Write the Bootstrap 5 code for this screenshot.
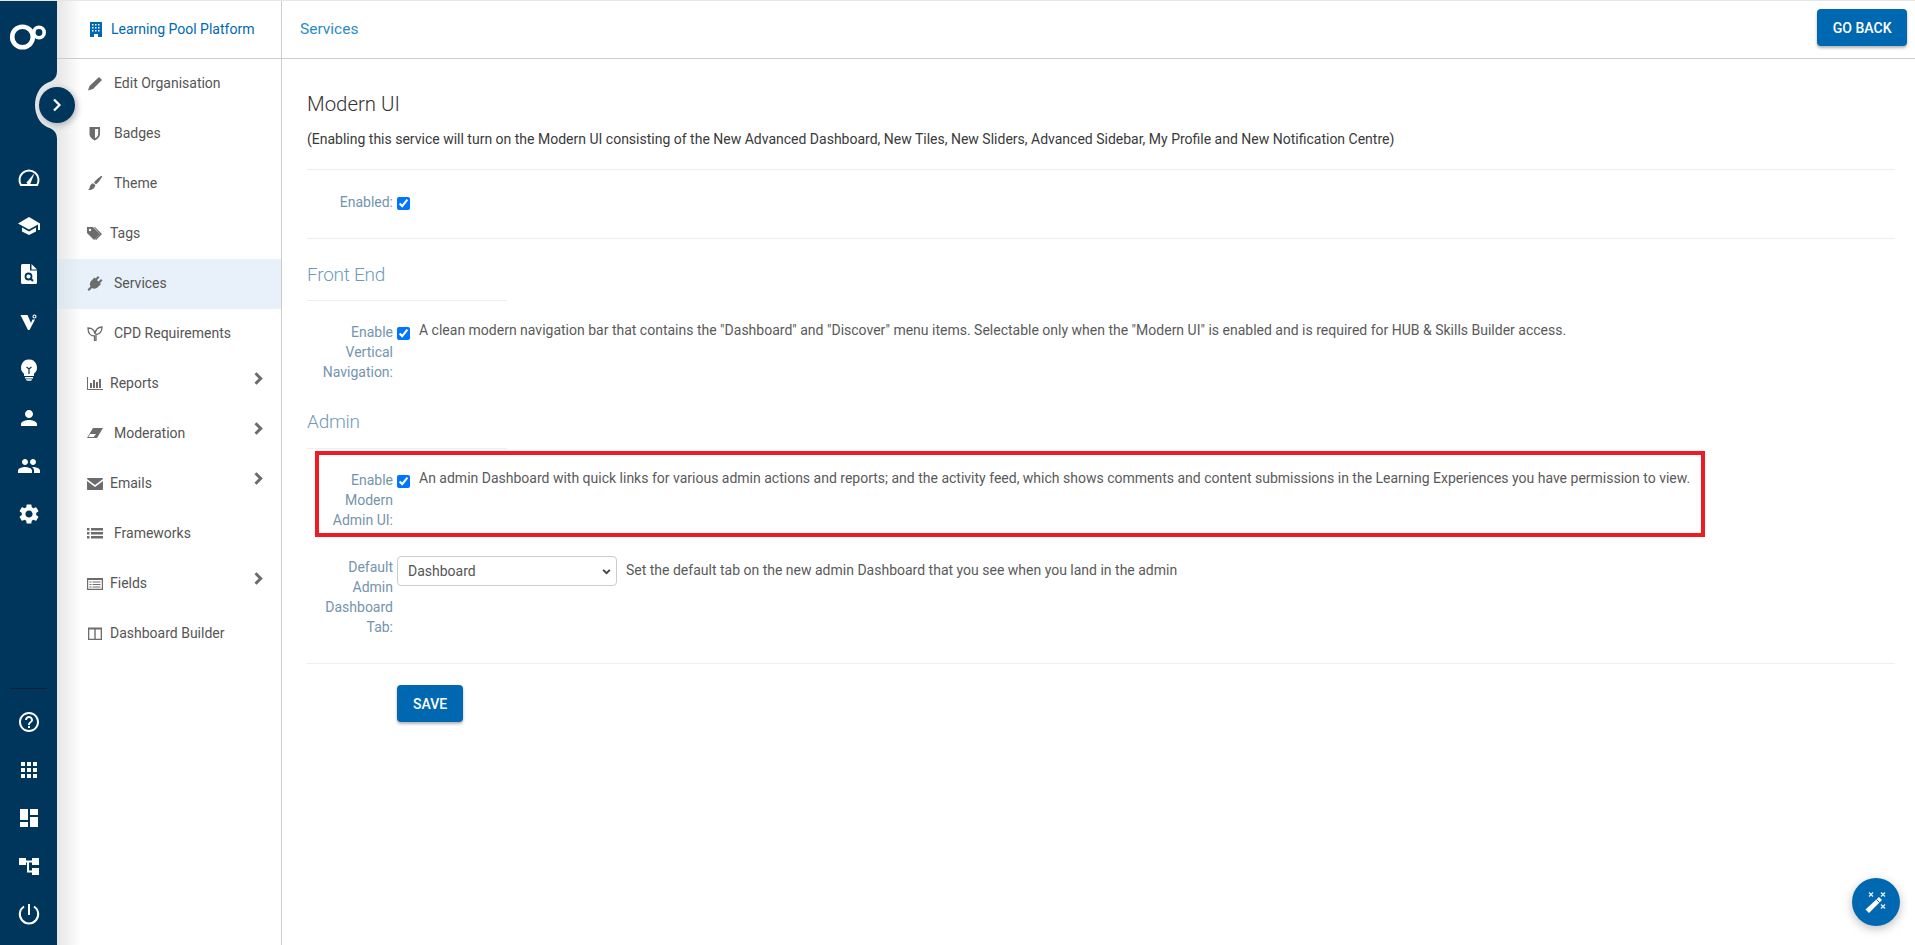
<!DOCTYPE html>
<html lang="en">
<head>
<meta charset="utf-8">
<title>Services</title>
<link rel="stylesheet" href="https://cdn.jsdelivr.net/npm/bootstrap@5.3.0/dist/css/bootstrap.min.css">
<style>
html,body{height:100%;overflow:hidden}
body{font-family:Roboto,"Liberation Sans",sans-serif;font-size:14px;line-height:20px;color:#5a5a5a;background:#fff;border-top:1px solid #e6e6e6}
.shell{height:944px}
.rail{width:57px;flex:none;background:#00365c;position:relative;z-index:3}
.rail svg{display:block;fill:#fff}
.rail-logo{height:72px;padding:20px 0 0 8px}
.rail-top{margin-top:81px}
.rail-cell{height:48px;display:flex;align-items:center;justify-content:center}
.rail-cell svg{width:24px;height:24px}
.rail-rule{width:37px;height:1px;background:#0b2234;margin:0 auto 9px}
.rail-bottom{margin-top:auto;padding-bottom:7px}
.notch{position:absolute;left:34px;top:70px;width:46px;height:68px;overflow:visible;z-index:4}
.toggle{position:absolute;left:39px;top:86px;width:36px;height:36px;border-radius:50%;background:#00365c;box-shadow:2px 2px 6px rgba(0,0,0,.25);z-index:5;display:flex;align-items:center;justify-content:center}
.subnav{width:225px;flex:none;border-right:1px solid #ccc;background:linear-gradient(90deg,#e6e6e6 0,#fff 24px)}
.subnav-head{height:56px;border-bottom:1px solid #ccc;display:flex;align-items:center;padding-left:33px;padding-bottom:1px;color:#0068b0;box-sizing:content-box;background:#fff linear-gradient(90deg,#e6e6e6 0,#fff 24px)}
.subnav-head svg{width:12px;height:15px;margin-right:9px;fill:#0068b0}
.side-link{height:50px;display:flex;align-items:center;padding:0 0 2px 30px;color:#555;text-decoration:none;position:relative}
.side-link.on{background:linear-gradient(90deg,#dde5ec 0,#e8f1f9 24px)}
.side-ic{width:23px;flex:none;display:flex}
.side-ic.wide{width:27px}
.side-ic svg{width:16px;height:15px;fill:#6c6c6c}
.side-more{position:absolute;left:197px;top:13px;width:9px;height:13px;fill:none;stroke:#6c6c6c;stroke-width:3}
.content{flex:1;min-width:0;position:relative}
.topbar{height:58px;border-bottom:1px solid #ccc;padding:8px 8px 0 18px}
.crumb{color:#2a8ac8;font-size:15.5px;line-height:40px;text-decoration:none}
.act-btn{background:#0068b0;border:0;color:#fff;font-weight:500;font-size:14px;line-height:20px;height:37px;border-radius:4px;text-transform:uppercase;box-shadow:0 2px 3px rgba(0,0,0,.3);padding:0 15.5px}
.act-btn:hover{background:#0068b0;color:#fff}
.pane{padding:0 20px 0 25px}
.pane-title{font-size:20.4px;line-height:24px;font-weight:300;color:#333;margin:33px 0 13px}
.pane-intro{color:#3a3a3a;margin:0 0 20px}
.rule{height:1px;background:#eee;margin:0}
.group-title{font-size:19px;letter-spacing:-.25px;line-height:24px;font-weight:300;color:#6f9bb9;margin:0}
.short-rule{width:200px;height:1px;background:#eee}
.field{display:flex;align-items:flex-start}
.field-lab{width:86px;flex:none;text-align:right;color:#7494ad;margin:0}
.field input[type=checkbox]{width:13px;height:13px;margin:5px 9px 0 4px;flex:none}
.field-note{margin-top:-2px}
.field-sel{width:220px;height:30px;flex:none;margin:-1px 9px 0 4px;padding:4px 10px;font-size:14px;line-height:20px;color:#555;border-color:#ccc;border-radius:4px;background-image:url("data:image/svg+xml,%3csvg xmlns='http://www.w3.org/2000/svg' viewBox='0 0 16 16'%3e%3cpath fill='none' stroke='%23444' stroke-width='3.400' d='m2 5 6 6 6-6'/%3e%3c/svg%3e");background-position:right 4px center;background-size:11px 9px;font-family:inherit}
.annot{position:absolute;left:8px;top:-19px;width:1390px;height:86px;border:4px solid #ed1c24;pointer-events:none}
.fab{position:absolute;right:15px;bottom:19px;width:48px;height:48px;border-radius:50%;background:#0068b0;box-shadow:0 3px 10px rgba(0,0,0,.25);display:flex;align-items:center;justify-content:center}
.gap-row-a{margin:22px 0 26px}
.gap-title-a{margin:24px 0 13px}
.gap-row-b{margin-top:21px}
.gap-title-b{margin:28px 0 14px}
.gap-row-c{margin-top:21px}
.gap-row-d{margin-top:27px}
.sel-note{margin-top:3px}
.gap-rule-e{margin-top:26px}
.gap-save{margin:21px 0 0 90px;padding:0 16px}
</style>
</head>
<body>
<div class="shell d-flex position-relative">
  <aside class="rail d-flex flex-column">
    <div class="rail-logo">
      <svg width="40" height="32" viewBox="0 0 40 32"><circle cx="14.500" cy="16" r="10.300" fill="none" stroke="#fff" stroke-width="4.600"/><circle cx="31" cy="11.500" r="5.200" fill="#00365c" stroke="#fff" stroke-width="3.600"/></svg>
    </div>
    <div class="rail-top">
      <div class="rail-cell"><svg viewBox="0 0 24 24"><path d="M3.900 19H20.100A9.500 9.500 0 1 0 3.900 19z" fill="none" stroke="#fff" stroke-width="2"/><path d="M17.500 7 13.500 17.500a2 2 0 0 1-3.700-1.300z"/></svg></div>
      <div class="rail-cell"><svg viewBox="0 0 24 24"><path d="M12 3 1 9.500 12 15.500l9-5V16h2V9.500zM5 13.500V17.500l7 3.500 7-3.500v-4L12 17.500z"/></svg></div>
      <div class="rail-cell"><svg viewBox="0 0 24 24"><path d="M5.500 2H13v6.500h7V20.500A1.500 1.500 0 0 1 18.500 22h-13A1.500 1.500 0 0 1 4 20.500v-17A1.500 1.500 0 0 1 5.500 2z"/><path d="M14.500 2l5.500 5.500h-5.500z"/><circle cx="11.500" cy="14.500" r="3" fill="none" stroke="#00365c" stroke-width="1.800"/><path d="m13.500 16.500 2.500 2.500" stroke="#00365c" stroke-width="2"/></svg></div>
      <div class="rail-cell"><svg viewBox="0 0 24 24"><path d="M3.500 5h7l3.500 8 1.500-3.500h2.500L12.500 20h-1.500z"/><circle cx="17.500" cy="6.500" r="1.500" fill="none" stroke="#fff" stroke-width="1.100"/></svg></div>
      <div class="rail-cell"><svg viewBox="0 0 24 24"><path d="M12 1.500a8 8 0 0 0-5 14.200V18h10v-2.300A8 8 0 0 0 12 1.500z"/><path d="M9.500 9l2.500 2 2.500-2M12 11v5" fill="none" stroke="#00365c" stroke-width="1.200"/><path d="M8 19h8v1.500H8zM9 21.300h6a3 1.500 0 0 1-6 0z"/></svg></div>
      <div class="rail-cell"><svg viewBox="0 0 24 24"><path d="M12 12c2.210 0 4-1.790 4-4s-1.790-4-4-4-4 1.790-4 4 1.790 4 4 4zm0 2c-2.670 0-8 1.340-8 4v2h16v-2c0-2.660-5.330-4-8-4z"/></svg></div>
      <div class="rail-cell"><svg viewBox="0 0 24 24"><path d="M16 11c1.660 0 2.990-1.340 2.990-3S17.660 5 16 5c-1.660 0-3 1.340-3 3s1.340 3 3 3zm-8 0c1.660 0 2.990-1.340 2.990-3S9.660 5 8 5C6.340 5 5 6.340 5 8s1.340 3 3 3zm0 2c-2.330 0-7 1.170-7 3.500V19h14v-2.500c0-2.330-4.670-3.500-7-3.500zm8 0c-.29 0-.62.02-.97.05 1.160.84 1.970 1.970 1.970 3.450V19h6v-2.500c0-2.330-4.670-3.500-7-3.500z"/></svg></div>
      <div class="rail-cell"><svg viewBox="0 0 24 24"><path d="M19.140 12.940c.04-.3.06-.61.06-.94 0-.32-.02-.64-.07-.94l2.030-1.580a.49.49 0 0 0 .12-.61l-1.920-3.320a.488.488 0 0 0-.59-.22l-2.390.96c-.5-.38-1.030-.7-1.620-.94l-.36-2.540a.484.484 0 0 0-.48-.41h-3.840c-.24 0-.43.17-.47.41l-.36 2.540c-.59.24-1.130.57-1.620.94l-2.390-.96c-.22-.08-.47 0-.59.22L2.740 8.870c-.12.21-.08.47.12.61l2.030 1.580c-.05.3-.09.63-.09.94s.02.64.07.94l-2.030 1.580a.49.49 0 0 0-.12.61l1.920 3.320c.12.22.37.29.59.22l2.390-.96c.5.38 1.030.7 1.620.94l.36 2.540c.05.24.24.41.48.41h3.840c.24 0 .44-.17.47-.41l.36-2.540c.59-.24 1.130-.56 1.620-.94l2.390.96c.22.08.47 0 .59-.22l1.920-3.320c.12-.22.07-.47-.12-.61l-2.010-1.580zM12 15.600c-1.980 0-3.600-1.620-3.600-3.600s1.620-3.600 3.600-3.600 3.600 1.620 3.600 3.600-1.620 3.600-3.600 3.600z"/></svg></div>
    </div>
    <div class="rail-bottom">
      <div class="rail-rule"></div>
      <div class="rail-cell"><svg viewBox="0 0 24 24"><path d="M11 18h2v-2h-2v2zm1-16C6.480 2 2 6.480 2 12s4.480 10 10 10 10-4.480 10-10S17.520 2 12 2zm0 18c-4.410 0-8-3.590-8-8s3.590-8 8-8 8 3.590 8 8-3.590 8-8 8zm0-14c-2.210 0-4 1.790-4 4h2c0-1.100.9-2 2-2s2 .9 2 2c0 2-3 1.750-3 5h2c0-2.250 3-2.500 3-5 0-2.210-1.790-4-4-4z"/></svg></div>
      <div class="rail-cell"><svg viewBox="0 0 24 24"><path d="M4 4h4v4H4zm6 0h4v4h-4zm6 0h4v4h-4zM4 10h4v4H4zm6 0h4v4h-4zm6 0h4v4h-4zM4 16h4v4H4zm6 0h4v4h-4zm6 0h4v4h-4z"/></svg></div>
      <div class="rail-cell"><svg viewBox="0 0 24 24"><path d="M3 3h8v11H3zm10 0h8v6h-8zm0 8h8v10h-8zM3 16h8v5H3z"/></svg></div>
      <div class="rail-cell"><svg viewBox="0 0 24 24"><path d="M2 4h7v7H2zm13 0h7v7h-7zm0 10h7v7h-7zM9 6.500h6v2h-3v8h3v2h-5V8.500H9z"/></svg></div>
      <div class="rail-cell"><svg viewBox="0 0 24 24"><path d="M11 2h2v11h-2z"/><path d="M7 4.500a9.200 9.200 0 1 0 10 0" fill="none" stroke="#fff" stroke-width="2"/></svg></div>
    </div>
  </aside>

  <svg class="notch" viewBox="0 0 46 68"><path d="M23 0C23 8 18 10 13 12C5 16 1 25 1 34s4 18 12 22c5 2 10 4 10 12z" fill="#e4e6e8"/></svg>
  <div class="toggle"><svg width="10" height="14" viewBox="0 0 10 14"><path d="M2 1.500 7.500 7 2 12.500" fill="none" stroke="#fff" stroke-width="2.200"/></svg></div>

  <nav class="subnav">
    <div class="subnav-head"><svg viewBox="0 0 12 15"><path d="M0 0h12v15H0z"/><path d="M2 2h1.500v1.500H2zm3 0h1.500v1.500H5zm3 0h1.500v1.500H8zM2 5h1.500v1.500H2zm3 0h1.500v1.500H5zm3 0h1.500v1.500H8zM2 8h1.500v1.500H2zm3 0h1.500v1.500H5zm3 0h1.500v1.500H8zM4 12h4v3H4z" fill="#fff"/></svg>Learning Pool Platform</div>
    <a class="side-link" href="#"><span class="side-ic wide"><svg viewBox="0 0 16 15"><path d="M12 1l3 3-9 9-5 1.500L2.500 10z"/></svg></span>Edit Organisation</a>
    <a class="side-link" href="#"><span class="side-ic wide"><svg viewBox="0 0 16 15"><path d="M2.500 1h10.500v7c0 3-3 5.500-5.250 6.500C5.500 13.500 2.500 11 2.500 8z"/><path d="M8 3h3.200v5c0 1.800-1.600 3.300-3.200 4.200z" fill="#fff"/></svg></span>Badges</a>
    <a class="side-link" href="#"><span class="side-ic wide"><svg viewBox="0 0 16 15"><path d="M15 0c.8.800-3 6-6 8.500L7 6.500C9.500 3.500 14.200-.8 15 0zM6.300 7.200l2 2C8 12 5 14.500 1 14c1.500-1 1.500-2 2-4 .5-1.500 2-2.500 3.300-2.800z"/></svg></span>Theme</a>
    <a class="side-link" href="#"><span class="side-ic"><svg viewBox="0 0 16 15"><path d="M0 1h6l7 7-6 6-7-7z"/><circle cx="3" cy="4" r="1.200" fill="#fff"/><path d="M8 1l7 7-6 6-1-1 5-5-6-7z"/></svg></span>Tags</a>
    <a class="side-link on" href="#"><span class="side-ic wide"><svg viewBox="0 0 16 15"><path d="M11 0l1.500 1.500L10 4l1.500 1.500L14 3l1.500 1.500L13 7l1 1-3 3c-2 2-4.500 2-6 1l-3 3-1.500-1.500 3-3c-1-1.500-1-4 1-6l3-3 1 1z"/></svg></span>Services</a>
    <a class="side-link" href="#"><span class="side-ic wide"><svg viewBox="0 0 16 15"><path d="M1 2c4 0 6.500 2 7 6 .5-4 3-7 7-7 0 4-2 7-6 7.500V15H7.500v-5C3 10 1 7 1 2z" fill="none" stroke="#6c6c6c" stroke-width="1.300"/></svg></span>CPD Requirements</a>
    <a class="side-link" href="#"><span class="side-ic"><svg viewBox="0 0 16 15"><path d="M0 1h1v12h15v1H0zM3 7h2v5H3zm3-3h2v8H6zm3 2h2v6H9zm3-3h2v9h-2z"/></svg></span>Reports<svg class="side-more" viewBox="0 0 9 13"><path d="M1.500 1.200 6.700 6.500l-5.200 5.300"/></svg></a>
    <a class="side-link" href="#"><span class="side-ic wide"><svg viewBox="0 0 16 15"><path d="M6 2h10l-6 10H0z"/><path d="M3 8h6l-2.300 3H1.500z" fill="#fff"/></svg></span>Moderation<svg class="side-more" viewBox="0 0 9 13"><path d="M1.500 1.200 6.700 6.500l-5.200 5.300"/></svg></a>
    <a class="side-link" href="#"><span class="side-ic"><svg viewBox="0 0 16 15"><path d="M1 2h14c.6 0 1 .4 1 1L8 9 0 3c0-.6.4-1 1-1zM0 5l8 6 8-6v8c0 .6-.4 1-1 1H1c-.6 0-1-.4-1-1z"/></svg></span>Emails<svg class="side-more" viewBox="0 0 9 13"><path d="M1.500 1.200 6.700 6.500l-5.200 5.300"/></svg></a>
    <a class="side-link" href="#"><span class="side-ic wide"><svg viewBox="0 0 16 15"><path d="M0 2h2.500v2.500H0zm4 0h12v2.500H4zM0 6h2.500v2.500H0zm4 0h12v2.500H4zM0 10h2.500v2.500H0zm4 0h12v2.500H4z"/></svg></span>Frameworks</a>
    <a class="side-link" href="#"><span class="side-ic"><svg viewBox="0 0 16 15"><path d="M0 2h16v12H0zM1.200 4v8.800h13.600V4zM2.500 5.500h2v1h-2zm3 0h8v1h-8zm-3 2.500h2v1h-2zm3 0h8v1h-8zm-3 2.500h2v1h-2zm3 0h8v1h-8z" fill-rule="evenodd"/></svg></span>Fields<svg class="side-more" viewBox="0 0 9 13"><path d="M1.500 1.200 6.700 6.500l-5.200 5.300"/></svg></a>
    <a class="side-link" href="#"><span class="side-ic"><svg viewBox="0 0 16 15"><path d="M1 1.500h14v12.500H1zm1.300 2v9.200h5V3.500zm6.400 0v9.200h5V3.500z" fill-rule="evenodd"/></svg></span>Dashboard Builder</a>
  </nav>

  <main class="content">
    <div class="topbar d-flex justify-content-between align-items-start">
      <a class="crumb" href="#">Services</a>
      <button class="btn act-btn" type="button">Go Back</button>
    </div>
    <div class="pane">
      <h1 class="pane-title">Modern UI</h1>
      <p class="pane-intro">(Enabling this service will turn on the Modern UI consisting of the New Advanced Dashboard, New Tiles, New Sliders, Advanced Sidebar, My Profile and New Notification Centre)</p>
      <div class="rule"></div>
      <div class="field gap-row-a">
        <label class="field-lab">Enabled:</label><input type="checkbox" checked>
      </div>
      <div class="rule"></div>
      <h2 class="group-title gap-title-a">Front End</h2>
      <div class="short-rule"></div>
      <div class="field gap-row-b">
        <label class="field-lab">Enable Vertical Navigation:</label><input type="checkbox" checked>
        <span class="field-note">A clean modern navigation bar that contains the "Dashboard" and "Discover" menu items. Selectable only when the "Modern UI" is enabled and is required for HUB &amp; Skills Builder access.</span>
      </div>
      <h2 class="group-title gap-title-b">Admin</h2>
      <div class="short-rule"></div>
      <div class="field position-relative gap-row-c">
        <label class="field-lab">Enable Modern Admin UI:</label><input type="checkbox" checked>
        <span class="field-note">An admin Dashboard with quick links for various admin actions and reports; and the activity feed, which shows comments and content submissions in the Learning Experiences you have permission to view.</span>
        <div class="annot"></div>
      </div>
      <div class="field gap-row-d">
        <label class="field-lab">Default Admin Dashboard Tab:</label>
        <select class="form-select field-sel"><option>Dashboard</option></select>
        <span class="sel-note">Set the default tab on the new admin Dashboard that you see when you land in the admin</span>
      </div>
      <div class="rule gap-rule-e"></div>
      <button class="btn act-btn gap-save" type="button">Save</button>
    </div>
    <div class="fab"><svg width="24" height="24" viewBox="0 0 24 24"><path d="M15 7l3 3L5 23l-3.500-3.500z" fill="#fff"/><path d="M12.500 9.500l3 3" stroke="#0068b0" stroke-width="1"/><path d="M5 2.500l4 4M9 2.500l-4 4M17 2.500l4 4M21 2.500l-4 4M17 14.500l4 4M21 14.500l-4 4" stroke="#e6eff6" stroke-width="1.300" fill="none"/></svg></div>
  </main>
</div>
</body>
</html>
